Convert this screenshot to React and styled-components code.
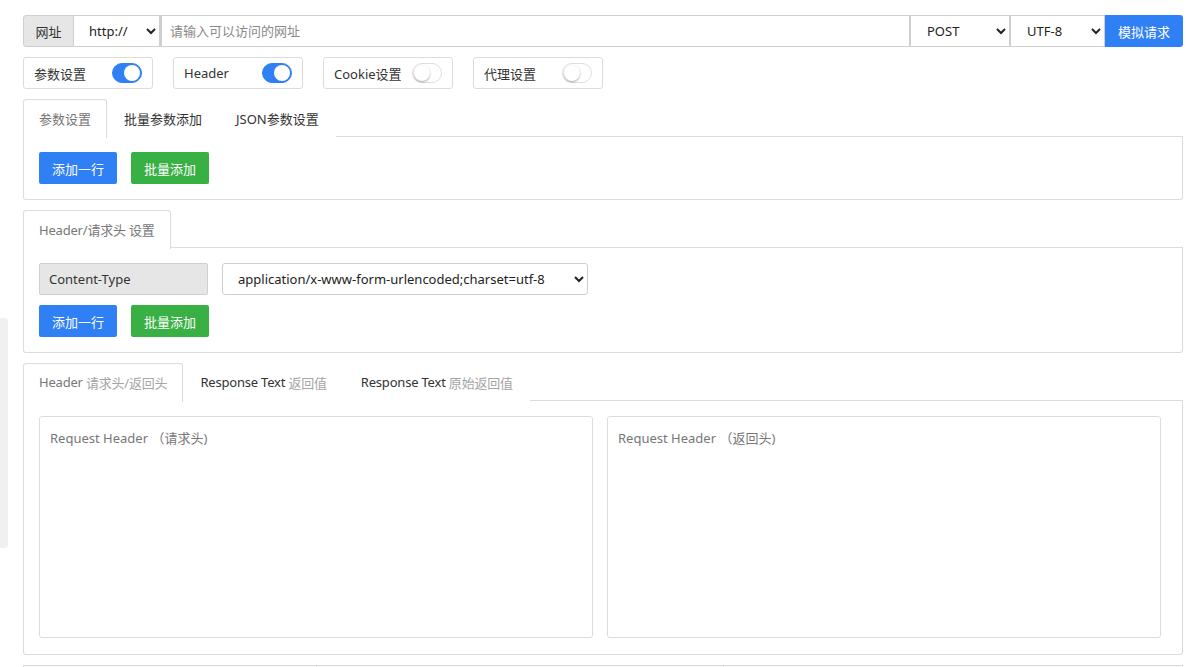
import React from "react";
import styled, { createGlobalStyle } from "styled-components";

const GlobalStyle = createGlobalStyle`
  html, body {
    margin: 0;
    padding: 0;
    background: #fff;
    font-family: "Noto Sans", "Noto Sans CJK SC", sans-serif;
    font-size: 13px;
    color: #333;
    overflow: hidden;
  }
  * { box-sizing: border-box; }
`;

const blue = "#2f80f5";
const green = "#38b043";
const line = "#dcdcdc";

const Page = styled.div`
  width: 1160px;
  margin-left: 23px;
  padding-top: 15px;
  display: flex;
  flex-direction: column;
`;

const SideTab = styled.div`
  position: fixed;
  left: 0;
  top: 318px;
  width: 8px;
  height: 230px;
  background: #f0f0f0;
  border-radius: 0 4px 4px 0;
`;

/* url bar */
const UrlBar = styled.div`
  display: flex;
  height: 32px;
`;

const Addon = styled.div`
  width: 51px;
  display: flex;
  align-items: center;
  justify-content: center;
  background: #e6e6e6;
  border: 1px solid #cfcfcf;
  border-radius: 3px 0 0 3px;
  color: #333;
`;

const Select = styled.select`
  width: ${(p) => p.$w || 100}px;
  height: 32px;
  border: 1px solid #cfcfcf;
  border-left: ${(p) => (p.$first ? "none" : "1px solid #cfcfcf")};
  background: #fff;
  color: #222;
  font-family: inherit;
  font-size: 13px;
  padding: 0 6px 0 ${(p) => p.$pl || 10}px;
  outline: none;
  border-radius: ${(p) => (p.$round ? "3px" : "0")};
`;

const UrlInput = styled.input`
  flex: 1;
  height: 32px;
  border: 1px solid #cfcfcf;
  border-left: 2px solid #cfcfcf;
  padding: 0 8px;
  font-family: inherit;
  font-size: 13px;
  outline: none;
  &::placeholder { color: #8a8a8a; }
`;

const SubmitBtn = styled.button`
  width: 78px;
  height: 32px;
  border: none;
  background: ${blue};
  color: #fff;
  font-family: inherit;
  font-size: 13px;
  border-radius: 0 3px 3px 0;
`;

/* switches */
const SwitchRow = styled.div`
  display: flex;
  gap: 20px;
  margin-top: 10px;
`;

const SwitchBox = styled.div`
  width: 130px;
  height: 32px;
  border: 1px solid ${line};
  border-radius: 3px;
  display: flex;
  align-items: center;
  justify-content: space-between;
  padding: 0 10px;
  color: #333;
`;

const Toggle = styled.span`
  width: 30px;
  height: 20px;
  border-radius: 10px;
  position: relative;
  background: ${(p) => (p.$on ? blue : "#fff")};
  border: 1px solid ${(p) => (p.$on ? blue : "#dedede")};
  &::after {
    content: "";
    position: absolute;
    top: 1px;
    left: ${(p) => (p.$on ? "11px" : "1px")};
    width: 16px;
    height: 16px;
    border-radius: 50%;
    background: #fff;
    box-shadow: ${(p) => (p.$on ? "none" : "0 1px 2px rgba(0,0,0,0.35)")};
  }
`;

/* tab panels */
const Panel = styled.section`
  margin-top: 10px;
`;

const TabBar = styled.div`
  display: flex;
  height: 38px;
  border-bottom: 1px solid ${line};
`;

const Tab = styled.div`
  height: 39px;
  padding: 0 ${(p) => (p.$active ? 15 : 16)}px 2px;
  display: flex;
  align-items: center;
  white-space: pre;
  letter-spacing: ${(p) => (p.$tight ? "-0.2px" : "0")};
  color: ${(p) => (p.$active ? "#777" : "#333")};
  background: #fff;
  border: 1px solid ${(p) => (p.$active ? line : "transparent")};
  border-bottom: none;
  border-radius: 3px 3px 0 0;
`;

const Dim = styled.span`
  color: #a5a5a5;
`;

const Body = styled.div`
  border: 1px solid ${line};
  border-top: none;
  border-radius: 0 0 3px 3px;
  padding: 15px;
  display: flex;
  flex-direction: column;
  gap: 10px;
`;

const BtnRow = styled.div`
  display: flex;
  gap: 14px;
`;

const Button = styled.button`
  width: 78px;
  height: 32px;
  border: none;
  border-radius: 2px;
  background: ${(p) => (p.$green ? green : blue)};
  color: #fff;
  font-family: inherit;
  font-size: 13px;
`;

const HeaderRow = styled.div`
  display: flex;
  gap: 14px;
`;

const KeyBox = styled.div`
  width: 169px;
  height: 32px;
  background: #e6e6e6;
  border: 1px solid #cfcfcf;
  border-radius: 2px;
  display: flex;
  align-items: center;
  padding-left: 9px;
  color: #333;
`;

const Split = styled.div`
  display: grid;
  grid-template-columns: 554px 554px;
  gap: 14px;
  padding-bottom: 1px;
`;

const Area = styled.textarea`
  height: 222px;
  border: 1px solid ${line};
  border-radius: 3px;
  resize: none;
  padding: 11px 10px;
  font-family: inherit;
  font-size: 13px;
  outline: none;
  &::placeholder { color: #777; }
`;

const TableHead = styled.div`
  margin-top: 10px;
  display: grid;
  grid-template-columns: 292px 407px 1fr;
  height: 40px;
  border: 1px solid ${line};
  background: #f7f7f7;
  div + div { border-left: 1px solid ${line}; }
`;

export default function App() {
  return (
    <>
      <GlobalStyle />
      <SideTab />
      <Page>
        <UrlBar>
          <Addon>网址</Addon>
          <Select $w={86} $first $pl={11} defaultValue="http">
            <option value="http">http://</option>
            <option value="https">https://</option>
          </Select>
          <UrlInput placeholder="请输入可以访问的网址" />
          <Select $w={100} $pl={12} defaultValue="POST">
            <option>POST</option>
            <option>GET</option>
          </Select>
          <Select $w={95} $pl={12} defaultValue="UTF-8">
            <option>UTF-8</option>
            <option>GBK</option>
          </Select>
          <SubmitBtn>模拟请求</SubmitBtn>
        </UrlBar>

        <SwitchRow>
          <SwitchBox>参数设置<Toggle $on /></SwitchBox>
          <SwitchBox>Header<Toggle $on /></SwitchBox>
          <SwitchBox>Cookie设置<Toggle /></SwitchBox>
          <SwitchBox>代理设置<Toggle /></SwitchBox>
        </SwitchRow>

        <Panel>
          <TabBar>
            <Tab $active>参数设置</Tab>
            <Tab>批量参数添加</Tab>
            <Tab>JSON参数设置</Tab>
          </TabBar>
          <Body>
            <BtnRow>
              <Button>添加一行</Button>
              <Button $green>批量添加</Button>
            </BtnRow>
          </Body>
        </Panel>

        <Panel>
          <TabBar>
            <Tab $active $tight>Header/请求头 设置</Tab>
          </TabBar>
          <Body>
            <HeaderRow>
              <KeyBox>Content-Type</KeyBox>
              <Select $w={366} $round $pl={11} defaultValue="form">
                <option value="form">application/x-www-form-urlencoded;charset=utf-8</option>
                <option value="json">application/json;charset=utf-8</option>
              </Select>
            </HeaderRow>
            <BtnRow>
              <Button>添加一行</Button>
              <Button $green>批量添加</Button>
            </BtnRow>
          </Body>
        </Panel>

        <Panel>
          <TabBar>
            <Tab $active $tight>Header <Dim>请求头/返回头</Dim></Tab>
            <Tab $tight>Response Text <Dim>返回值</Dim></Tab>
            <Tab $tight>Response Text <Dim>原始返回值</Dim></Tab>
          </TabBar>
          <Body>
            <Split>
              <Area placeholder="Request Header （请求头)" />
              <Area placeholder="Request Header （返回头)" />
            </Split>
          </Body>
        </Panel>

        <TableHead>
          <div />
          <div />
          <div />
        </TableHead>
      </Page>
    </>
  );
}
